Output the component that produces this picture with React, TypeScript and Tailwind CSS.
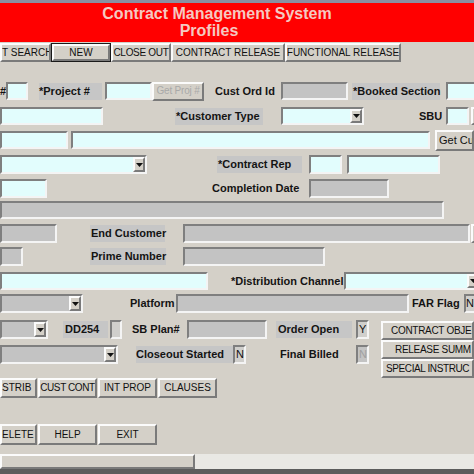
import React from "react";

// classic forms bevels
const inset =
  "border-2 border-t-[#7f7f7f] border-l-[#7f7f7f] border-r-[#f4f4f4] border-b-[#f4f4f4]";
const raised =
  "border-2 border-t-[#fbfbfb] border-l-[#fbfbfb] border-r-[#7a7a7a] border-b-[#7a7a7a]";

const tones: Record<string, string> = {
  cyan: "bg-[#e2fdfd]",
  gray: "bg-[#c3c3c3]",
  light: "bg-[#d0cfcc]",
};

function Row({ className = "", children }: { className?: string; children?: React.ReactNode }) {
  return <div className={`flex items-center shrink-0 ${className}`}>{children}</div>;
}

function Field({
  className = "",
  tone = "cyan",
  children,
}: {
  className?: string;
  tone?: string;
  children?: React.ReactNode;
}) {
  return (
    <div
      className={`shrink-0 h-full flex items-center overflow-hidden text-[11px] leading-none ${inset} ${tones[tone]} ${className}`}
    >
      {children}
    </div>
  );
}

function Select({ className = "", tone = "cyan" }: { className?: string; tone?: string }) {
  return (
    <div className={`shrink-0 h-full flex justify-end ${inset} ${tones[tone]} ${className}`}>
      <div className={`h-full w-[12px] flex items-center justify-center bg-[#d4d0c8] ${raised}`}>
        <svg width="7" height="6" viewBox="0 0 7 6">
          <path d="M0 1h7L3.5 5z" fill="#111" />
        </svg>
      </div>
    </div>
  );
}

function Label({
  className = "",
  bg = false,
  children,
}: {
  className?: string;
  bg?: boolean;
  children?: React.ReactNode;
}) {
  return (
    <div
      className={`shrink-0 h-[17px] flex items-center whitespace-nowrap text-[11px] font-bold text-[#141414] leading-none ${
        bg ? "bg-[#c6c6c6]" : ""
      } ${className}`}
    >
      {children}
    </div>
  );
}

function Btn({
  className = "",
  left = false,
  children,
}: {
  className?: string;
  left?: boolean;
  children?: React.ReactNode;
}) {
  return (
    <div
      className={`shrink-0 flex items-center whitespace-nowrap overflow-hidden text-[10px] leading-none bg-[#d4d0c8] ${
        left ? "justify-start" : "justify-center"
      } ${raised} ${className}`}
    >
      {children}
    </div>
  );
}

export default function App() {
  return (
    <div className="w-[474px] h-[474px] overflow-hidden flex flex-col bg-[#d4d0c8] text-[#111] font-['Liberation_Sans',Arial,sans-serif]">
      <div className="h-[3px] shrink-0 bg-[#8a90a2]" />
      <div className="h-[39px] shrink-0 bg-[#ff0000] flex flex-col pt-[2px] text-[16px] font-bold leading-[17px] text-[#f5c9c1]">
        <div className="text-center pr-[40px]">Contract Management System</div>
        <div className="text-center pr-[56px]">Profiles</div>
      </div>

      {/* toolbar */}
      <Row className="h-[20px] items-end">
        <Btn left className="w-[51px] h-[19px]">
          T SEARCH
        </Btn>
        <div className="shrink-0 w-[60px] h-[19px] border border-[#1a1a1a] flex">
          <Btn className="w-full h-full">NEW</Btn>
        </div>
        <Btn className="w-[60px] h-[19px] tracking-[-0.3px]">CLOSE OUT</Btn>
        <Btn className="w-[114px] h-[19px]">CONTRACT RELEASE</Btn>
        <Btn className="w-[116px] h-[19px]">FUNCTIONAL RELEASE</Btn>
      </Row>

      <Row className="mt-[20px] h-[18px]">
        <Label className="w-[6px] overflow-hidden">#</Label>
        <Field className="w-[22px]" />
        <Label bg className="ml-[11px] w-[63px]">
          *Project #
        </Label>
        <Field className="ml-[3px] w-[47px]" />
        <Btn className="w-[52px] h-[19px] text-[10.5px] tracking-[-0.2px] text-[#a9a9a9]">
          Get Proj #
        </Btn>
        <Label className="ml-[11px] w-[66px]">Cust Ord Id</Label>
        <Field tone="gray" className="w-[67px]" />
        <Label bg className="ml-[4px] w-[88px] pl-[1px]">
          *Booked Section
        </Label>
        <Field className="ml-[6px] w-[40px]" />
      </Row>

      <Row className="mt-[7px] h-[18px]">
        <Field className="w-[103px]" />
        <Label bg className="ml-[72px] w-[88px] pl-[1px]">
          *Customer Type
        </Label>
        <Select className="ml-[18px] w-[83px]" />
        <Label className="ml-[55px] w-[23px]">SBU</Label>
        <Field className="ml-[4px] w-[23px]" />
        <Btn className="ml-[2px] w-[12px] h-[18px]" />
      </Row>

      <Row className="mt-[6px] h-[18px]">
        <Field className="w-[68px]" />
        <Field className="ml-[3px] w-[359px]" />
        <Btn left className="ml-[5px] w-[39px] h-[21px] pl-[2px] text-[11px]">
          Get Cu
        </Btn>
      </Row>

      <Row className="mt-[6px] h-[19px]">
        <Select className="w-[147px]" />
        <Label bg className="ml-[70px] w-[85px] pl-[1px]">
          *Contract Rep
        </Label>
        <Field className="ml-[7px] w-[33px]" />
        <Field className="ml-[5px] w-[93px]" />
      </Row>

      <Row className="mt-[5px] h-[19px]">
        <Field className="w-[47px]" />
        <Label className="ml-[165px] w-[92px]">Completion Date</Label>
        <Field tone="gray" className="ml-[5px] w-[80px]" />
      </Row>

      <Row className="mt-[3px] h-[18px]">
        <Field tone="gray" className="w-[444px]" />
      </Row>

      <Row className="mt-[5px] h-[19px]">
        <Field tone="gray" className="w-[57px]" />
        <Label bg className="ml-[33px] w-[75px] pl-[1px]">
          End Customer
        </Label>
        <Field tone="gray" className="ml-[18px] w-[287px]" />
        <Btn className="ml-[1px] w-[10px] h-[19px]" />
      </Row>

      <Row className="mt-[4px] h-[19px]">
        <Field tone="gray" className="w-[23px]" />
        <Label bg className="ml-[67px] w-[76px] pl-[1px]">
          Prime Number
        </Label>
        <Field tone="gray" className="ml-[17px] w-[142px]" />
      </Row>

      <Row className="mt-[6px] h-[18px]">
        <Field className="w-[208px]" />
        <Label className="ml-[23px] w-[113px]">*Distribution Channel</Label>
        <Select className="w-[137px]" />
      </Row>

      <Row className="mt-[4px] h-[19px]">
        <Select tone="gray" className="w-[83px]" />
        <Label className="ml-[47px] w-[46px]">Platform</Label>
        <Field tone="gray" className="w-[233px]" />
        <Label className="ml-[3px] w-[52px]">FAR Flag</Label>
        <Field tone="light" className="w-[14px]">
          N
        </Field>
      </Row>

      <div className="mt-[7px] flex shrink-0">
        <div className="w-[381px] shrink-0 flex flex-col">
          <Row className="h-[19px]">
            <Select tone="gray" className="w-[48px]" />
            <Label bg className="ml-[15px] w-[45px] pl-[2px]">
              DD254
            </Label>
            <Field tone="light" className="ml-[2px] w-[12px]" />
            <Label className="ml-[10px] w-[55px]">SB Plan#</Label>
            <Field tone="gray" className="w-[80px]" />
            <Label bg className="ml-[9px] w-[76px] pl-[2px]">
              Order Open
            </Label>
            <Field tone="light" className="ml-[4px] w-[13px] pl-[1px]">
              Y
            </Field>
          </Row>
          <Row className="mt-[6px] h-[19px]">
            <Select tone="gray" className="w-[118px]" />
            <Label bg className="ml-[18px] w-[97px]">
              Closeout Started
            </Label>
            <Field tone="light" className="w-[13px] pl-[1px]">
              N
            </Field>
            <Label className="ml-[34px] w-[62px]">Final Billed</Label>
            <Field tone="gray" className="ml-[14px] w-[13px] pl-[1px] text-[#a0a0a0]">
              N
            </Field>
          </Row>
        </div>
        <div className="mt-[1px] flex flex-col">
          <Btn left className="w-[93px] h-[19px] pl-[8px] tracking-[-0.3px]">
            CONTRACT OBJE
          </Btn>
          <Btn left className="w-[93px] h-[19px] pl-[12px] tracking-[-0.3px]">
            RELEASE SUMM
          </Btn>
          <Btn left className="w-[93px] h-[19px] pl-[3px] tracking-[-0.4px]">
            SPECIAL INSTRUC
          </Btn>
        </div>
      </div>

      <Row className="h-[20px] gap-[1px]">
        <Btn left className="w-[37px] h-[20px]">
          STRIB
        </Btn>
        <Btn className="w-[59px] h-[20px] tracking-[-0.4px]">CUST CONT</Btn>
        <Btn className="w-[59px] h-[20px]">INT PROP</Btn>
        <Btn className="w-[59px] h-[20px]">CLAUSES</Btn>
      </Row>

      <Row className="mt-[26px] h-[21px] gap-[1px]">
        <Btn left className="w-[37px] h-[21px]">
          ELETE
        </Btn>
        <Btn className="w-[59px] h-[21px]">HELP</Btn>
        <Btn className="w-[59px] h-[21px]">EXIT</Btn>
      </Row>

      <Row className="mt-[9px] h-[15px] bg-[#e9e8e4]">
        <div className={`w-[195px] h-full bg-[#d4d0c8] ${raised}`} />
      </Row>
      <div className="flex-1 bg-[#5c5c5c]" />
    </div>
  );
}
